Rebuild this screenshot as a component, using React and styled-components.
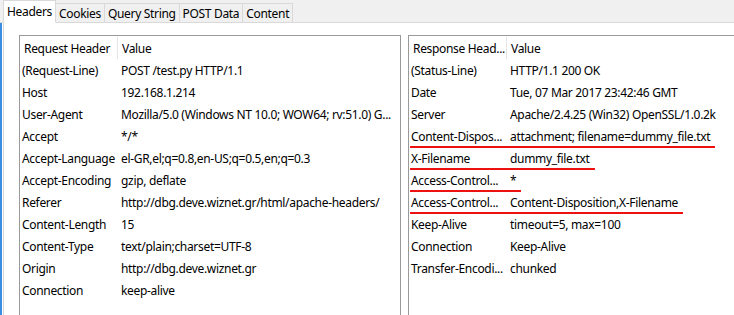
import styled, { createGlobalStyle } from "styled-components";

// Headers tab of an HTTP debugger: request list on the left, response list on the right

const GlobalStyle = createGlobalStyle`
  html, body {
    margin: 0;
    padding: 0;
    background: #fff;
    overflow: hidden;
  }
  body {
    font-family: "Noto Sans", "Open Sans", sans-serif;
    font-size: 12px;
    letter-spacing: -0.32px;
    color: #000;
  }
`;

const Window = styled.div`
  width: 734px;
  height: 315px;
  display: flex;
  flex-direction: column;
  overflow: hidden;
`;

const TabStrip = styled.div`
  height: 22px;
  display: flex;
  align-items: flex-end;
  padding-left: 3px;
  background: #f0f0f0;
  border-bottom: 1px solid #d9d9d9;
`;

const Tab = styled.div`
  height: ${(p) => (p.active ? "21px" : "18px")};
  margin-bottom: ${(p) => (p.active ? "-1px" : "0")};
  padding: 0 3px;
  display: flex;
  align-items: center;
  background: ${(p) => (p.active ? "#fff" : "#f0f0f0")};
  border: 1px solid #d9d9d9;
  border-bottom: ${(p) => (p.active ? "1px solid #fff" : "none")};
  margin-left: ${(p) => (p.first ? "0" : "-1px")};
  position: relative;
  z-index: ${(p) => (p.active ? 1 : 0)};
  white-space: nowrap;
`;

const Frame = styled.div`
  flex: 1;
  display: flex;
  border-left: 2px solid #3b8fe3;
  padding-left: 1px;
  min-height: 0;
`;

const Panel = styled.div`
  flex: 1;
  display: flex;
  gap: 7px;
  padding: 12px 0 0 15px;
  border-left: 1px solid #d9d9d9;
  min-width: 0;
`;

const ListBox = styled.div`
  width: ${(p) => p.width}px;
  flex: none;
  height: 320px;
  padding-top: 1px;
  box-sizing: border-box;
  border: 1px solid #9a9a9a;
  background: #fff;
`;

const Row = styled.div`
  height: 22px;
  display: flex;
  align-items: center;
  white-space: nowrap;
`;

const HeadCell = styled.div`
  width: ${(p) => (p.width ? p.width + "px" : "auto")};
  flex: ${(p) => (p.width ? "none" : "1")};
  height: 100%;
  display: flex;
  align-items: center;
  padding-left: 4px;
  box-sizing: border-box;
  border-right: ${(p) => (p.width ? "1px solid #e5e5e5" : "none")};
  overflow: hidden;
`;

const Cell = styled.div`
  width: ${(p) => (p.width ? p.width + "px" : "auto")};
  flex: none;
  padding-left: ${(p) => (p.width ? "2px" : "3px")};
  padding-right: ${(p) => (p.width ? "0" : "5px")};
  box-sizing: border-box;
  overflow: hidden;
`;

const Marked = styled.div`
  position: relative;
  height: 100%;
  display: flex;
  align-items: center;

  &::after {
    content: "";
    position: absolute;
    left: 1px;
    right: 0;
    bottom: -1px;
    height: 2px;
    background: #ee1111;
  }
`;

const tabs = ["Headers", "Cookies", "Query String", "POST Data", "Content"];

const requestRows = [
  ["(Request-Line)", "POST /test.py HTTP/1.1"],
  ["Host", "192.168.1.214"],
  ["User-Agent", "Mozilla/5.0 (Windows NT 10.0; WOW64; rv:51.0) G..."],
  ["Accept", "*/*"],
  ["Accept-Language", "el-GR,el;q=0.8,en-US;q=0.5,en;q=0.3"],
  ["Accept-Encoding", "gzip, deflate"],
  ["Referer", "http://dbg.deve.wiznet.gr/html/apache-headers/"],
  ["Content-Length", "15"],
  ["Content-Type", "text/plain;charset=UTF-8"],
  ["Origin", "http://dbg.deve.wiznet.gr"],
  ["Connection", "keep-alive"],
];

const responseRows = [
  ["(Status-Line)", "HTTP/1.1 200 OK"],
  ["Date", "Tue, 07 Mar 2017 23:42:46 GMT"],
  ["Server", "Apache/2.4.25 (Win32) OpenSSL/1.0.2k"],
  ["Content-Dispos...", "attachment; filename=dummy_file.txt", true],
  ["X-Filename", "dummy_file.txt", true],
  ["Access-Control...", "*", true],
  ["Access-Control...", "Content-Disposition,X-Filename", true],
  ["Keep-Alive", "timeout=5, max=100"],
  ["Connection", "Keep-Alive"],
  ["Transfer-Encodi...", "chunked"],
];

const COL = 98;

const HeaderList = ({ title, rows, width }) => (
  <ListBox width={width}>
    <Row>
      <HeadCell width={COL}>{title}</HeadCell>
      <HeadCell>Value</HeadCell>
    </Row>
    {rows.map(([name, value, marked], i) => {
      const cells = (
        <>
          <Cell width={COL}>{name}</Cell>
          <Cell>{value}</Cell>
        </>
      );
      return <Row key={i}>{marked ? <Marked>{cells}</Marked> : cells}</Row>;
    })}
  </ListBox>
);

export default function App() {
  return (
    <Window>
      <GlobalStyle />
      <TabStrip>
        {tabs.map((t, i) => (
          <Tab key={t} active={i === 0} first={i === 0}>
            {t}
          </Tab>
        ))}
      </TabStrip>
      <Frame>
        <Panel>
          <HeaderList title="Request Header" rows={requestRows} width={382} />
          <HeaderList title="Response Head..." rows={responseRows} width={400} />
        </Panel>
      </Frame>
    </Window>
  );
}
